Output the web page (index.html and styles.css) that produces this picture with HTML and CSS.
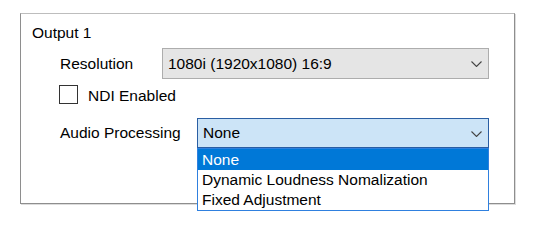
FILE: index.html
```html
<!DOCTYPE html>
<html lang="en">
<head>
    <meta charset="UTF-8">
    <title>Output Settings</title>
    <link rel="stylesheet" href="styles.css">
</head>
<body>
<div class="group">
    <div class="group-title">Output 1</div>
    <div class="row">
        <label class="field-label label-resolution">Resolution</label>
        <div class="combo">
            <span class="combo-text">1080i (1920x1080) 16:9</span>
            <svg class="chevron" width="11" height="6" viewBox="0 0 11 6"><polyline points="0.5,0.5 5.5,5.5 10.5,0.5" fill="none" stroke="#444" stroke-width="1.1"/></svg>
        </div>
    </div>
    <div class="check-row">
        <span class="checkbox"></span>
        <span class="check-text">NDI Enabled</span>
    </div>
    <div class="row row-audio">
        <label class="field-label label-audio">Audio Processing</label>
        <div class="combo combo-open">
            <span class="combo-text">None</span>
            <svg class="chevron" width="11" height="6" viewBox="0 0 11 6"><polyline points="0.5,0.5 5.5,5.5 10.5,0.5" fill="none" stroke="#444" stroke-width="1.1"/></svg>
            <ul class="dropdown">
                <li class="selected">None</li>
                <li>Dynamic Loudness Nomalization</li>
                <li>Fixed Adjustment</li>
            </ul>
        </div>
    </div>
</div>
</body>
</html>
```

FILE: styles.css
```css
html, body {
    min-height: 234px;
}
body {
    margin: 0;
    background: #fff;
    font-family: "Liberation Sans", Arial, sans-serif;
    font-size: 15.5px;
    line-height: 20px;
    color: #000;
}
.group {
    box-sizing: border-box;
    margin: 13px 0 0 20px;
    width: 495px;
    height: 191px;
    padding: 9px 25px 0 38px;
    border: 1px solid #8e8e8e;
    border-top-color: #bdbdbd;
    box-shadow: 1px 1px 0 #dcdcdc;
}
.group-title {
    margin-left: -27px;
}
.row {
    display: flex;
    align-items: center;
    margin-top: 5px;
}
.row-audio {
    margin-top: 12px;
}
.field-label {
    flex: none;
    padding-left: 1px;
}
.label-resolution {
    width: 102px;
}
.label-audio {
    width: 137px;
}
.combo {
    position: relative;
    flex: 1;
    box-sizing: border-box;
    height: 31px;
    display: flex;
    align-items: center;
    padding: 0 6px 0 5px;
    background: #e5e5e5;
    border: 1px solid #adadad;
}
.combo-text {
    flex: 1;
}
.chevron {
    display: block;
    margin-top: 1px;
}
.combo-open {
    height: 30px;
    background: #cce4f7;
    border-color: #2a5ea3;
}
.dropdown {
    position: absolute;
    top: calc(100% + 1px);
    left: -1px;
    right: -1px;
    margin: 0;
    padding: 0;
    list-style: none;
    background: #fff;
    border: 1px solid #2f80df;
}
.dropdown li {
    height: 20px;
    padding-left: 4px;
    line-height: 20px;
}
.dropdown li.selected {
    height: 21px;
    line-height: 22px;
    background: #0078d7;
    color: #fff;
}
.check-row {
    display: flex;
    align-items: flex-start;
    height: 21px;
    margin-top: 6px;
}
.checkbox {
    box-sizing: border-box;
    width: 19px;
    height: 19px;
    border: 1px solid #333;
    background: #fff;
}
.check-text {
    margin-left: 10px;
    padding-top: 1px;
}
```
